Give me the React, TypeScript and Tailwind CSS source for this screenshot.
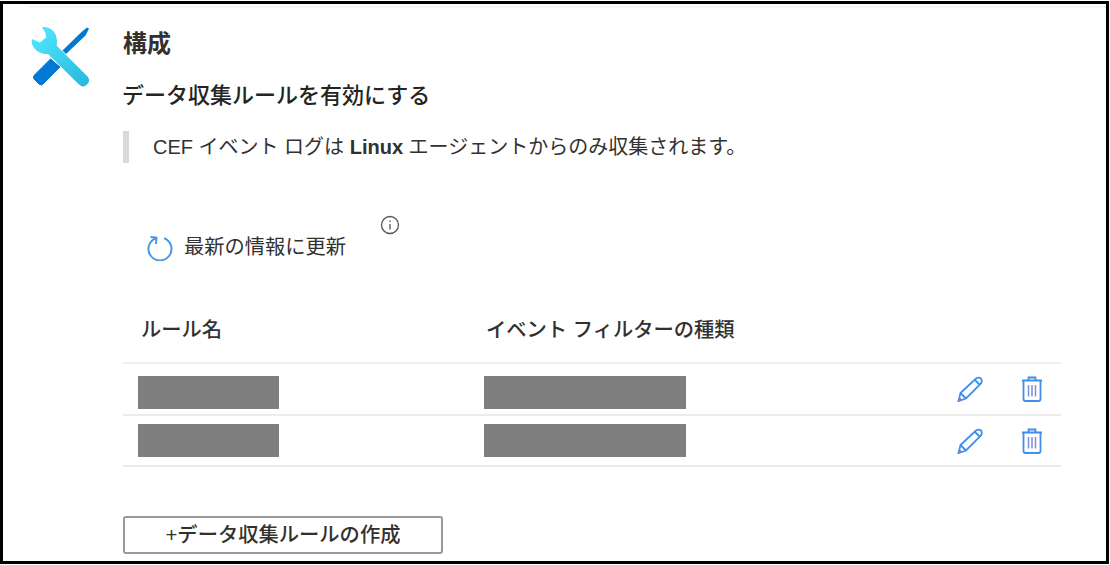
import React from 'react';

function ToolsIcon() {
  return (
    <svg width="70" height="70" viewBox="0 0 70 70" className="shrink-0">
      <defs>
        <linearGradient id="tools" x1="10" y1="8" x2="60" y2="62" gradientUnits="userSpaceOnUse">
          <stop stopColor="#50e6ff" />
          <stop offset="1" stopColor="#29bade" />
        </linearGradient>
      </defs>
      <path d="M62 5.5 L64 6.5 L60.5 13.5 L41 32 L37.5 28.5 L56.5 10 Z" fill="#0078d4" />
      <path d="M25.5 37 Q27 38 29 40 L35 45 L18 62 Q16 64 14 62 L9 57 Q7.5 55 9.5 53 Z" fill="#0078d4" stroke="#0078d4" strokeWidth="1" />
      <path d="M18 5.5 Q27 6 30 13 Q32 18 31 24 L62 55 Q65 59 61 62.5 Q58 65 54.5 62 L23 31 Q16 32 11 27 Q7 23 7.5 18 L15 21.5 L22 15.5 L21 10 Z" fill="url(#tools)" stroke="url(#tools)" strokeWidth="1.5" strokeLinejoin="round" />
    </svg>
  );
}

function PencilIcon() {
  return (
    <svg width="26" height="26" viewBox="0 0 26 26" fill="none" stroke="#3f8fe8" strokeWidth="1.8" className="shrink-0">
      <path d="M1.5 25 L3.5 17 L19 2.5 Q21.5 0.8 24 2.5 Q25.5 5 24 7.5 L9 22.5 Z" />
      <path d="M3.5 17 L9 22.5 M18 4 L23 9" />
      <path d="M1.5 25 L2.5 21.5 L5 24 Z" fill="#7a7fd8" stroke="#7a7fd8" strokeWidth="1" />
    </svg>
  );
}

function TrashIcon() {
  return (
    <svg width="22" height="26" viewBox="0 0 22 26" fill="none" stroke="#3f8fe8" strokeWidth="1.8" className="shrink-0">
      <path d="M1 4.5 H21 M7.5 4 V1.5 H14.5 V4" />
      <path d="M2.5 5 V23 Q2.5 25 4.5 25 H17.5 Q19.5 25 19.5 23 V5" />
      <path d="M7.5 9 V20.5 M11 9 V20.5 M14.5 9 V20.5" stroke="#7d8fd8" strokeWidth="1.5" />
    </svg>
  );
}

function RefreshIcon() {
  return (
    <svg width="28" height="28" viewBox="6 6 28 28" fill="none" stroke="#3f96e6" strokeWidth="1.9" className="shrink-0">
      <path d="M16.5 11 A11.5 11.5 0 1 0 24 11.2" />
      <path d="M10.5 10 L16.5 10.5 L16 17" />
    </svg>
  );
}

function InfoIcon() {
  return (
    <svg width="20" height="20" viewBox="0 0 20 20" fill="none" stroke="#555" strokeWidth="1.3">
      <circle cx="10" cy="10" r="8.5" />
      <path d="M10 9 V14.5" />
      <path d="M10 5.5 V7" />
    </svg>
  );
}

function Row({ className, barClassName }: { className: string; barClassName: string }) {
  return (
    <div className={`${className} border-b-2 border-[#ececec] pl-[15px] pr-[18px] flex items-start`}>
      <div className={`${barClassName} w-[141px] h-[33px] bg-[#7f7f7f] mr-[205px]`} />
      <div className={`${barClassName} w-[202px] h-[33px] bg-[#7f7f7f]`} />
      <div className="ml-auto self-center flex items-center gap-[38px]">
        <PencilIcon />
        <TrashIcon />
      </div>
    </div>
  );
}

export default function App() {
  return (
    <div className="w-[1109px] h-[563px] mt-px bg-white border-[3px] border-black overflow-hidden font-['Liberation_Sans','Noto_Sans_CJK_JP',sans-serif] text-[#323130]">
      <div className="ml-[25px] mt-[2px] h-[2px] bg-[#f7f7f7]" />
      <div className="flex">
        <div className="w-[120px] pl-[22px] pt-[14px] shrink-0">
          <ToolsIcon />
        </div>
        <div className="w-[938px] pt-[19px]">
          <h1 className="text-[24px] leading-[34px] font-bold">構成</h1>
          <h2 className="-ml-px mt-[20px] text-[22px] leading-[30px] font-medium text-[#252423]">データ収集ルールを有効にする</h2>
          <div className="mt-[20px] h-[32px] border-l-[6px] border-[#d9d9d9] pl-[24px] flex items-center text-[20px] whitespace-nowrap">
            <span>CEF イベント ログは <b>Linux</b> エージェントからのみ収集されます。</span>
          </div>
          <div className="mt-[52px] pl-[23px] flex items-start">
            <div className="mt-[18px] flex items-center gap-[10px]">
              <RefreshIcon />
              <span className="text-[20.25px] leading-[28px]">最新の情報に更新</span>
            </div>
            <div className="ml-[34px]">
              <InfoIcon />
            </div>
          </div>
          <div className="mt-[54px] h-[47px] pl-[18px] flex items-start text-[20.3px] leading-[30px] font-medium">
            <div className="w-[345px]">ルール名</div>
            <div>イベント フィルターの種類</div>
          </div>
          <div className="border-t-2 border-[#f0f0f0]">
            <Row className="h-[52px]" barClassName="mt-[12px]" />
            <Row className="h-[51px]" barClassName="mt-[8px]" />
          </div>
          <button className="mt-[49px] w-[320px] h-[38px] border-2 border-[#999999] rounded-[3px] bg-white text-[20.3px] leading-[30px] font-medium text-[#323130] flex items-center justify-center">
            +データ収集ルールの作成
          </button>
        </div>
      </div>
    </div>
  );
}
